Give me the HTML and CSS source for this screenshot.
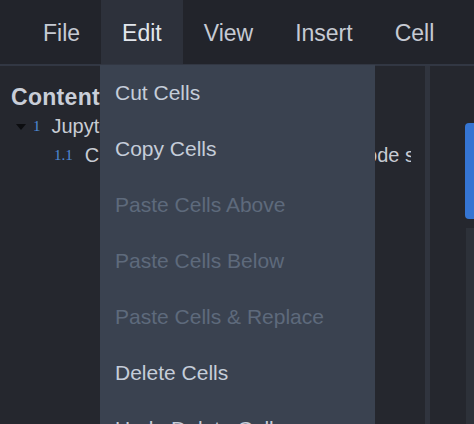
FILE: index.html
```html
<!DOCTYPE html>
<html>
<head>
<meta charset="utf-8">
<link rel="stylesheet" href="styles.css">
</head>
<body>
<div class="app">
  <nav class="menubar">
    <div class="menu-item">File</div>
    <div class="menu-item active">Edit</div>
    <div class="menu-item">View</div>
    <div class="menu-item">Insert</div>
    <div class="menu-item">Cell</div>
  </nav>
  <div class="main">
    <aside class="toc">
      <div class="toc-title">Contents</div>
      <div class="toc-row level1">
        <span class="caret"></span>
        <span class="num">1</span>
        <span class="label">Jupyter Notebook Style Guide</span>
      </div>
      <div class="toc-row level2">
        <span class="num">1.1</span>
        <span class="label">Checking Your Notebook with Code style</span>
      </div>
    </aside>
    <div class="divider"></div>
    <div class="content">
      <div class="scrollbar">
        <div class="thumb"></div>
        <div class="track"></div>
      </div>
    </div>
  </div>
  <div class="dropdown">
    <div class="dd-item">Cut Cells</div>
    <div class="dd-item">Copy Cells</div>
    <div class="dd-item disabled">Paste Cells Above</div>
    <div class="dd-item disabled">Paste Cells Below</div>
    <div class="dd-item disabled">Paste Cells &amp; Replace</div>
    <div class="dd-item">Delete Cells</div>
    <div class="dd-item">Undo Delete Cells</div>
  </div>
</div>
</body>
</html>
```
FILE: styles.css
```css
html, body {
  margin: 0;
  padding: 0;
  background: #25272e;
}
body {
  font-family: "Liberation Sans", Arial, sans-serif;
  width: 474px;
  height: 424px;
  overflow: hidden;
}
.app {
  position: relative;
  width: 474px;
  height: 424px;
  display: flex;
  flex-direction: column;
  overflow: hidden;
}
.menubar {
  display: flex;
  height: 64px;
  padding-left: 22px;
  background: #22242b;
  border-bottom: 2px solid #323743;
  flex-shrink: 0;
}
.menu-item {
  display: flex;
  align-items: center;
  padding: 2px 21px 0;
  font-size: 23px;
  color: #c6cad3;
}
.menu-item.active {
  background: #2d313b;
  color: #e2e6ec;
}
.main {
  flex: 1;
  display: flex;
  min-height: 0;
}
.toc {
  width: 411px;
  padding-left: 11px;
  padding-top: 18px;
  box-sizing: border-box;
  overflow: hidden;
  white-space: nowrap;
  color: #c8ccd4;
  margin-right: 14px;
}
.toc-title {
  font-size: 23px;
  font-weight: bold;
  letter-spacing: 0.3px;
  line-height: 26px;
  color: #c9ced8;
}
.toc-row {
  display: flex;
  align-items: center;
  height: 29px;
  font-size: 20px;
}
.toc-row.level1 {
  padding-left: 5px;
  margin-top: 2px;
}
.toc-row.level2 {
  padding-left: 43px;
}
.caret {
  width: 0;
  height: 0;
  border-left: 5px solid transparent;
  border-right: 5px solid transparent;
  border-top: 6px solid #0c0d10;
  margin-right: 7px;
}
.num {
  font-family: "Liberation Serif", serif;
  font-size: 15px;
  color: #4f8ad6;
  margin-right: 11px;
}
.level2 .num {
  margin-right: 12px;
}
.divider {
  width: 5px;
  background: #30343e;
  flex-shrink: 0;
}
.content {
  flex: 1;
  display: flex;
  justify-content: flex-end;
}
.scrollbar {
  width: 9px;
  display: flex;
  flex-direction: column;
  padding-top: 57px;
}
.thumb {
  height: 96px;
  background: #3575d3;
  border-radius: 4px 0 0 4px;
}
.track {
  flex: 1;
  margin-top: 9px;
  margin-left: 1px;
  background: #2d3139;
}
.dropdown {
  position: absolute;
  left: 100px;
  top: 65px;
  width: 275px;
  height: 380px;
  background: #3a4250;
}
.dd-item {
  height: 56px;
  display: flex;
  align-items: center;
  padding-left: 15px;
  font-size: 21px;
  color: #c5cdd9;
}
.dd-item.disabled {
  color: #5e6a7c;
}
```
